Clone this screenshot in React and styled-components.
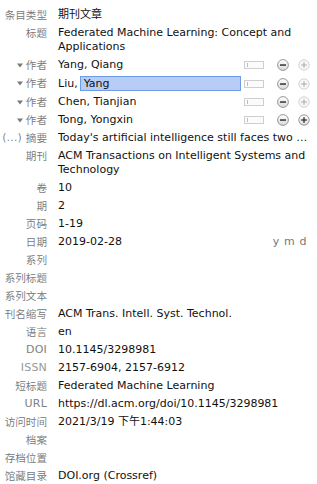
import React from "react";
import styled, { createGlobalStyle } from "styled-components";

const Global = createGlobalStyle`
  html, body { margin: 0; padding: 0; background: #fff; }
  body {
    font-family: "DejaVu Sans", "Noto Sans CJK SC", sans-serif;
    font-size: 11px;
    -webkit-font-smoothing: antialiased;
  }
`;

const Pane = styled.div`
  width: 317px;
  box-sizing: border-box;
  padding: 6px 7px 0 0;
  display: flex;
  flex-direction: column;
`;

const Row = styled.div`
  display: grid;
  grid-template-columns: 48px 1fr;
  column-gap: 10px;
  padding: 2px 0;
  line-height: 14px;
`;

const Label = styled.div`
  display: flex;
  justify-content: flex-end;
  align-items: center;
  align-self: start;
  height: 14px;
  gap: 3px;
  padding-right: 1px;
  font-size: 10.6px;
  font-weight: 350;
  color: ${(p) => (p.$light ? "#999" : "#767676")};
  white-space: nowrap;
  font-family: "Noto Sans CJK SC", "DejaVu Sans", sans-serif;
`;

const LatinLabel = styled.span`
  font-family: "DejaVu Sans", sans-serif;
  font-weight: 400;
  font-size: 11px;
  letter-spacing: 0.2px;
  color: ${(p) => (p.$light ? "#999" : "#808080")};
`;

const Ellip = styled.span`
  color: #8a8a8a;
  font-family: "DejaVu Sans", sans-serif;
  font-weight: 400;
  font-size: 11px;
  margin-right: 1px;
`;

const Value = styled.div`
  color: #111;
  min-width: 0;
  white-space: ${(p) => (p.$nowrap ? "nowrap" : "normal")};
  overflow: ${(p) => (p.$nowrap ? "hidden" : "visible")};
  text-overflow: ${(p) => (p.$nowrap ? "ellipsis" : "clip")};
`;

const DateValue = styled.div`
  display: flex;
  justify-content: space-between;
  color: #111;
  padding-right: 3px;
`;

const DateHint = styled.span`
  color: #777;
  letter-spacing: 0.6px;
`;

const AuthorValue = styled.div`
  display: flex;
  align-items: center;
  min-width: 0;
`;

const Name = styled.div`
  flex: 1;
  display: flex;
  align-items: center;
  color: #111;
  white-space: nowrap;
  min-width: 0;
`;

const EditBox = styled.div`
  flex: 1;
  height: 13px;
  line-height: 13px;
  margin-left: 2px;
  padding-left: 3px;
  background: #b8cdf5;
  border: 1px solid #6c9ce6;
  color: #111;
`;

const Controls = styled.div`
  display: flex;
  align-items: center;
  margin-left: 3px;
  width: 66px;
`;

const ModeBtn = styled.svg`
  width: 20px;
  height: 8px;
  margin-right: 13px;
`;

const RoundBtn = styled.svg`
  width: 12px;
  height: 12px;
  margin-left: ${(p) => (p.$gap ? "9px" : "0")};
`;

const Tri = () => (
  <svg width="6" height="5" viewBox="0 0 6 5">
    <polygon points="0,0.5 6,0.5 3,4.5" fill="#7a7a7a" />
  </svg>
);

const Mode = () => (
  <ModeBtn viewBox="0 0 20 8">
    <rect x="0.5" y="0.5" width="19" height="7" fill="#fbfbfb" stroke="#cfcfcf" />
    <line x1="3.5" y1="2" x2="3.5" y2="6" stroke="#bdbdbd" />
  </ModeBtn>
);

const Minus = () => (
  <RoundBtn viewBox="0 0 12 12">
    <defs>
      <linearGradient id="gm" x1="0" y1="0" x2="0" y2="1">
        <stop offset="0" stopColor="#ffffff" />
        <stop offset="1" stopColor="#d8d8d8" />
      </linearGradient>
    </defs>
    <circle cx="6" cy="6" r="5.4" fill="url(#gm)" stroke="#8c8c8c" strokeWidth="0.9" />
    <rect x="3" y="5.2" width="6" height="1.7" fill="#4a4a4a" />
  </RoundBtn>
);

const Plus = ({ active }) => (
  <RoundBtn $gap viewBox="0 0 12 12">
    <defs>
      <linearGradient id="gp" x1="0" y1="0" x2="0" y2="1">
        <stop offset="0" stopColor="#ffffff" />
        <stop offset="1" stopColor="#dcdcdc" />
      </linearGradient>
    </defs>
    <circle
      cx="6"
      cy="6"
      r="5.2"
      fill={active ? "url(#gp)" : "#f7f7f7"}
      stroke={active ? "#8c8c8c" : "#cdcdcd"}
      strokeWidth="0.9"
    />
    <rect x="3.2" y="5.3" width="5.6" height="1.4" fill={active ? "#3a3a3a" : "#bdbdbd"} />
    <rect x="5.3" y="3.2" width="1.4" height="5.6" fill={active ? "#3a3a3a" : "#bdbdbd"} />
  </RoundBtn>
);

const Field = ({ label, light, children, nowrap }) => (
  <Row>
    <Label $light={light}>{label}</Label>
    <Value $nowrap={nowrap}>{children}</Value>
  </Row>
);

const Author = ({ last, first, editing, lastRow }) => (
  <Row>
    <Label>
      <Tri />
      作者
    </Label>
    <AuthorValue>
      <Name>
        {editing ? (
          <>
            {last},
            <EditBox>{first}</EditBox>
          </>
        ) : (
          `${last}, ${first}`
        )}
      </Name>
      <Controls>
        <Mode />
        <Minus />
        <Plus active={lastRow} />
      </Controls>
    </AuthorValue>
  </Row>
);

export default function App() {
  return (
    <>
      <Global />
      <Pane>
        <Field label="条目类型">期刊文章</Field>
        <Field label="标题">Federated Machine Learning: Concept and Applications</Field>
        <Author last="Yang" first="Qiang" />
        <Author last="Liu" first="Yang" editing />
        <Author last="Chen" first="Tianjian" />
        <Author last="Tong" first="Yongxin" lastRow />
        <Field
          nowrap
          label={
            <>
              <Ellip>(…)</Ellip>摘要
            </>
          }
        >
          Today's artificial intelligence still faces two major challenges. One is that in most industries, data exists in the form of isolated islands.
        </Field>
        <Field label="期刊">ACM Transactions on Intelligent Systems and Technology</Field>
        <Field label="卷">10</Field>
        <Field label="期">2</Field>
        <Field label="页码">1-19</Field>
        <Row>
          <Label>日期</Label>
          <DateValue>
            <span>2019-02-28</span>
            <DateHint>y m d</DateHint>
          </DateValue>
        </Row>
        <Field label="系列" />
        <Field label="系列标题" />
        <Field label="系列文本" />
        <Field label="刊名缩写">ACM Trans. Intell. Syst. Technol.</Field>
        <Field label="语言">en</Field>
        <Field label={<LatinLabel>DOI</LatinLabel>}>10.1145/3298981</Field>
        <Field light label={<LatinLabel $light>ISSN</LatinLabel>}>2157-6904, 2157-6912</Field>
        <Field label="短标题">Federated Machine Learning</Field>
        <Field label={<LatinLabel>URL</LatinLabel>}>https://dl.acm.org/doi/10.1145/3298981</Field>
        <Field label="访问时间">2021/3/19 下午1:44:03</Field>
        <Field label="档案" />
        <Field label="存档位置" />
        <Field label="馆藏目录">DOI.org (Crossref)</Field>
      </Pane>
    </>
  );
}
